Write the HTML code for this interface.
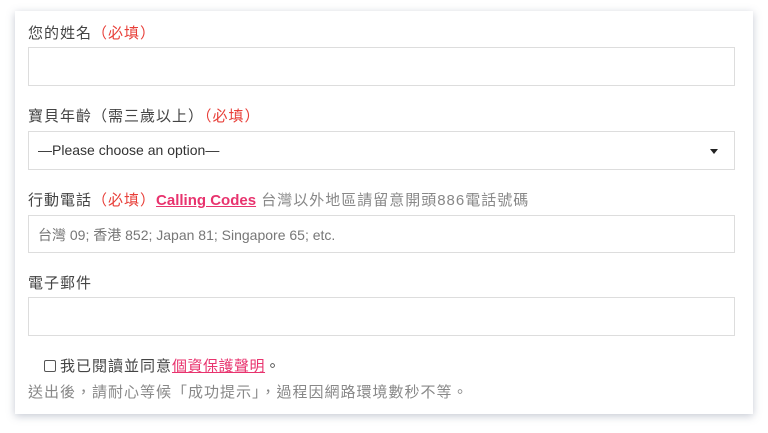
<!DOCTYPE html>
<html><head><meta charset="utf-8"><style>
body{margin:0;width:768px;height:433px;background:#fff;font-family:"Liberation Sans","Noto Sans CJK TC",sans-serif;position:relative;overflow:hidden}
.card{position:absolute;left:15px;top:11px;width:738px;height:403px;background:#fff;box-shadow:0 2px 8px rgba(90,100,130,.35)}
.l{position:absolute;left:28px;font-size:15px;color:#444;line-height:20px;white-space:nowrap;letter-spacing:1px}
.r{color:#e8403a}
.a{color:#e8336e;font-weight:bold;text-decoration:underline;letter-spacing:0}
.g{color:#888}
.i{position:absolute;left:28px;width:707px;border:1px solid #ddd;background:#fff;box-sizing:border-box}
</style></head><body>
<div class="card"></div>
<div class="l" style="top:24px">您的姓名<span class="r">（必填）</span></div>
<div class="i" style="top:47px;height:39px"></div>
<div class="l" style="top:107px">寶貝年齡（需三歲以上）<span class="r">（必填）</span></div>
<div class="i" style="top:131px;height:39px"><span style="position:absolute;left:9px;top:10px;font-size:14px;color:#333">—Please choose an option—</span><span style="position:absolute;right:16px;top:17px;border-left:4px solid transparent;border-right:4px solid transparent;border-top:5px solid #222"></span></div>
<div class="l" style="top:191px">行動電話<span class="r">（必填）</span><span class="a">Calling Codes</span> <span class="g">台灣以外地區請留意開頭886電話號碼</span></div>
<div class="i" style="top:215px;height:38px"><span style="position:absolute;left:9px;top:9px;font-size:14px;color:#777">台灣 09; 香港 852; Japan 81; Singapore 65; etc.</span></div>
<div class="l" style="top:274px">電子郵件</div>
<div class="i" style="top:297px;height:39px"></div>
<div class="l" style="top:357px;left:44px"><span style="display:inline-block;width:10px;height:10px;border:1px solid #555;border-radius:2px;vertical-align:-1px;margin-right:4px"></span>我已閱讀並同意<span class="a" style="font-weight:normal;letter-spacing:0.5px">個資保護聲明</span>。</div>
<div class="l g" style="top:383px">送出後，請耐心等候「成功提示」，過程因網路環境數秒不等。</div>
</body></html>
